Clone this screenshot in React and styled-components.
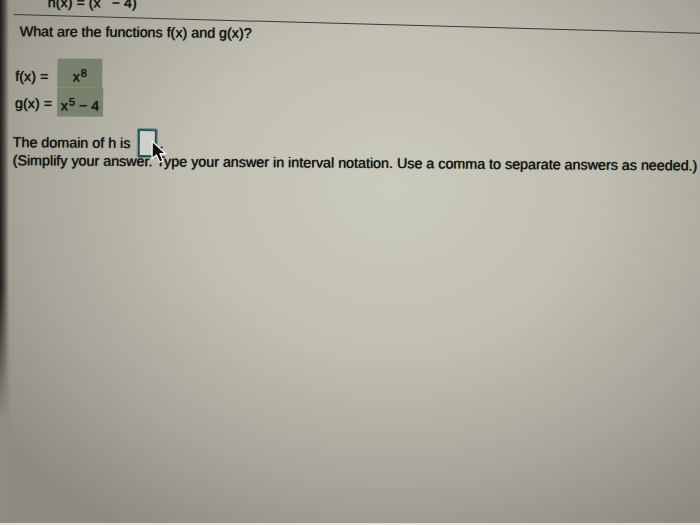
import React from "react"
import styled, { createGlobalStyle } from "styled-components"

const Global = createGlobalStyle`
  html, body {
    margin: 0;
    padding: 0;
    background: #8e8b81;
  }
  body {
    font-family: "Liberation Sans", Arial, sans-serif;
  }
`

const Screen = styled.div`
  width: 700px;
  height: 525px;
  overflow: hidden;
  position: relative;
  background:
    linear-gradient(to bottom, rgba(142, 139, 129, 0) 0, rgba(142, 139, 129, 0) 55%, rgba(142, 139, 129, 1) 80%) left top / 10px 100% no-repeat,
    linear-gradient(to right, rgba(20, 20, 18, 0.95) 0, rgba(20, 20, 18, 0.6) 4px, rgba(20, 20, 18, 0) 9px) left top / 10px 100% no-repeat,
    radial-gradient(ellipse 72% 78% at 56% 36%, #cbcbbd 0%, #c0bfb1 40%, #a8a69a 72%, #8c897f 100%);
  border-bottom: 2px solid #e4e4dc;
  box-sizing: border-box;
`

const Content = styled.div`
  padding-left: 14px;
  transform: rotate(0.45deg);
  transform-origin: 0 0;
  color: #161614;
  font-size: 14.3px;
  text-shadow: 0 0 0.9px rgba(0, 0, 0, 0.95);
`

const Clipped = styled.div`
  margin-top: -10px;
  padding-left: 34px;
  height: 14px;
  line-height: 14px;
`

const Divider = styled.div`
  margin-top: 10px;
  height: 1px;
  background: #3a3a36;
  margin-right: -40px;
  transform: rotate(1.1deg);
  transform-origin: 0 0;
`

const Question = styled.div`
  margin-top: 8px;
  padding-left: 6px;
  line-height: 16px;
`

const Functions = styled.div`
  margin-top: 19px;
  display: flex;
  flex-direction: column;
  padding-left: 2px;
`

const FnRow = styled.div`
  display: flex;
  align-items: center;
  gap: 2px;
`

const FnLabel = styled.span`
  width: 40px;
  line-height: 16px;
  padding-top: ${p => p.drop || 0}px;
`

const AnswerBox = styled.div`
  width: ${p => p.w}px;
  height: 29px;
  background: #77816c;
  display: flex;
  align-items: flex-end;
  justify-content: center;
  padding-bottom: 4px;
  box-sizing: border-box;
  line-height: 14px;
`

const Sup = styled.sup`
  font-size: 11px;
  position: relative;
  top: -4px;
  margin-left: 1px;
`

const Domain = styled.div`
  margin-top: 12px;
  display: flex;
  align-items: center;
  line-height: 16px;
  position: relative;
`

const InputBox = styled.span`
  width: 15px;
  height: 24px;
  margin-left: 7px;
  border: 2px solid #1f5556;
  outline: 1px solid #6f8c8a;
  background: #cfd0c8;
  border-radius: 1px;
`

const Dot = styled.span`
  margin-left: 3px;
  align-self: center;
`

const Cursor = styled.svg`
  position: absolute;
  left: 138px;
  top: 11px;
`

const Note = styled.div`
  margin-top: -4px;
  line-height: 16px;
  white-space: nowrap;
`

export default function App() {
  return (
    <>
      <Global />
      <Screen>
        <Content>
          <Clipped>
            h(x) = (x<Sup>5</Sup> − 4)<Sup>8</Sup>
          </Clipped>
          <Divider />
          <Question>What are the functions f(x) and g(x)?</Question>
          <Functions>
            <FnRow>
              <FnLabel drop={6}>f(x) =</FnLabel>
              <AnswerBox w={45}>
                x<Sup>8</Sup>
              </AnswerBox>
            </FnRow>
            <FnRow>
              <FnLabel drop={2}>g(x) =</FnLabel>
              <AnswerBox w={46}>
                x<Sup>5</Sup>&nbsp;− 4
              </AnswerBox>
            </FnRow>
          </Functions>
          <Domain>
            The domain of h is
            <InputBox />
            <Dot>.</Dot>
            <Cursor width="18" height="24" viewBox="0 0 16 22">
              <path
                d="M1 1 L1 17 L5 13.5 L8 20 L11 18.6 L8.2 12.3 L13.5 12.3 Z"
                fill="#111"
                stroke="#f2f2ee"
                strokeWidth="1.2"
                strokeLinejoin="round"
              />
            </Cursor>
          </Domain>
          <Note>
            (Simplify your answer. Type your answer in interval notation. Use a comma to separate answers as needed.)
          </Note>
        </Content>
      </Screen>
    </>
  )
}
